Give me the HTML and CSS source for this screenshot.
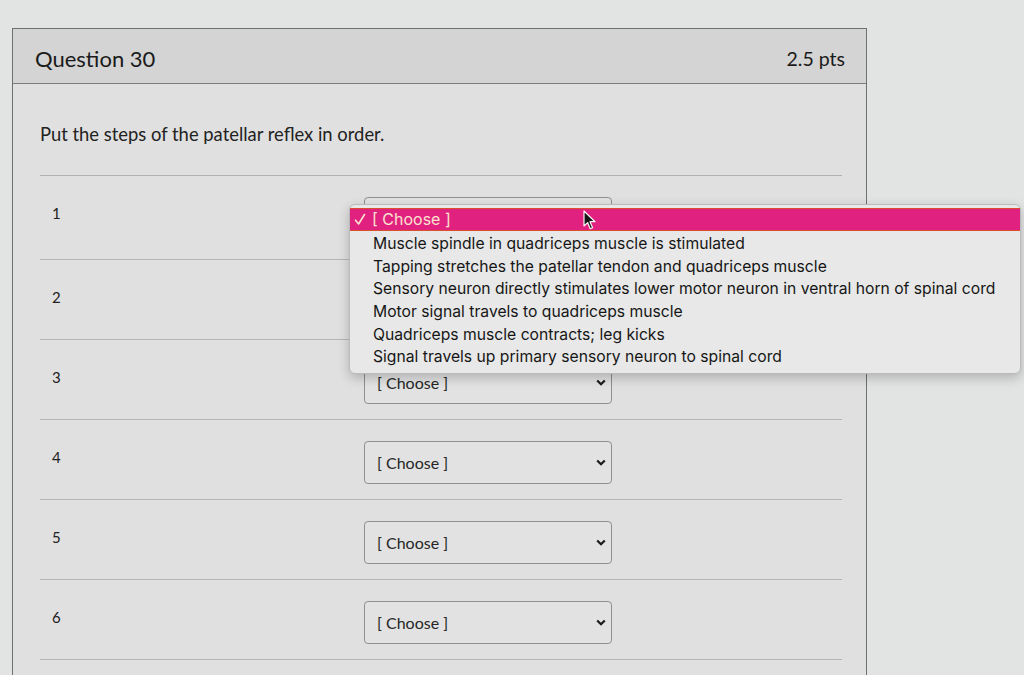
FILE: index.html
```html
<!DOCTYPE html>
<html lang="en">
<head>
    <meta charset="UTF-8">
    <title>Question 30</title>

    <link rel="stylesheet" href="styles.css">
</head>
<body>
<div class="card">
    <div class="cardHead">
        <h2 class="qTitle">Question 30</h2>
        <span class="pts">2.5 pts</span>
    </div>
    <div class="cardBody">
        <p class="prompt">Put the steps of the patellar reflex in order.</p>

        <div class="row first">
            <span class="num">1</span>
            <div class="pick">
                <span class="covered">[ Choose ]</span>
                <svg class="chev" width="10" height="7" viewBox="0 0 10 7"><path d="M1.2 1.5 L5 5.3 L8.8 1.5" fill="none" stroke="#1c1c1c" stroke-width="2.2"/></svg>

                <div class="menu">
                    <div class="menuItem active">
                        <svg class="tick" width="12" height="13" viewBox="0 0 12 13"><path d="M1.5 7.2 L4.6 11 L10.5 1.5" fill="none" stroke="#fbe2cf" stroke-width="1.6" stroke-linecap="round" stroke-linejoin="round"/></svg>
                        [ Choose ]
                        <svg class="cursor" width="14" height="21" viewBox="0 0 14 21"><path d="M1 1 L1 16 L4.6 12.6 L7.2 18.8 L9.6 17.8 L7 11.7 L12 11.7 Z" fill="#151515" stroke="#f4f4f4" stroke-width="1.2" stroke-linejoin="round"/></svg>
                    </div>
                    <div class="menuItem">Muscle spindle in quadriceps muscle is stimulated</div>
                    <div class="menuItem">Tapping stretches the patellar tendon and quadriceps muscle</div>
                    <div class="menuItem">Sensory neuron directly stimulates lower motor neuron in ventral horn of spinal cord</div>
                    <div class="menuItem">Motor signal travels to quadriceps muscle</div>
                    <div class="menuItem">Quadriceps muscle contracts; leg kicks</div>
                    <div class="menuItem">Signal travels up primary sensory neuron to spinal cord</div>
                </div>
            </div>
        </div>

        <div class="row">
            <span class="num">2</span>
            <div class="pick">
                <span class="covered">[ Choose ]</span>
                <svg class="chev" width="10" height="7" viewBox="0 0 10 7"><path d="M1.2 1.5 L5 5.3 L8.8 1.5" fill="none" stroke="#1c1c1c" stroke-width="2.2"/></svg>
            </div>
        </div>

        <div class="row">
            <span class="num">3</span>
            <div class="pick">
                <span>[ Choose ]</span>
                <svg class="chev" width="10" height="7" viewBox="0 0 10 7"><path d="M1.2 1.5 L5 5.3 L8.8 1.5" fill="none" stroke="#1c1c1c" stroke-width="2.2"/></svg>
            </div>
        </div>

        <div class="row">
            <span class="num">4</span>
            <div class="pick">
                <span>[ Choose ]</span>
                <svg class="chev" width="10" height="7" viewBox="0 0 10 7"><path d="M1.2 1.5 L5 5.3 L8.8 1.5" fill="none" stroke="#1c1c1c" stroke-width="2.2"/></svg>
            </div>
        </div>

        <div class="row">
            <span class="num">5</span>
            <div class="pick">
                <span>[ Choose ]</span>
                <svg class="chev" width="10" height="7" viewBox="0 0 10 7"><path d="M1.2 1.5 L5 5.3 L8.8 1.5" fill="none" stroke="#1c1c1c" stroke-width="2.2"/></svg>
            </div>
        </div>

        <div class="row">
            <span class="num">6</span>
            <div class="pick">
                <span>[ Choose ]</span>
                <svg class="chev" width="10" height="7" viewBox="0 0 10 7"><path d="M1.2 1.5 L5 5.3 L8.8 1.5" fill="none" stroke="#1c1c1c" stroke-width="2.2"/></svg>
            </div>
        </div>
    </div>
</div>
</body>
</html>
```

FILE: styles.css
```css
html, body {
    overflow: hidden;
}

body {
    font-family: Lato, "Open Sans", sans-serif;
    margin: 0;
    padding: 28px 0 0 12px;
    background-color: #e2e4e3;
    color: #222;
}

.card {
    width: 853px;
    border: 1px solid #6f7070;
    border-bottom: none;
    background-color: #dfe0df;
}

.cardHead {
    display: flex;
    justify-content: space-between;
    align-items: center;
    height: 54px;
    padding: 0 21px 0 22px;
    background-color: #d3d4d3;
    border-bottom: 1px solid #7b7c7b;
}

.qTitle {
    margin: 0;
    font-size: 22px;
    font-weight: 400;
    color: #1a1a1a;
    padding-top: 4px;
}

.pts {
    font-size: 19.5px;
    color: #1a1a1a;
    padding-top: 4px;
}

.cardBody {
    padding: 0 24px 40px 27px;
}

.prompt {
    margin: 0;
    padding: 38px 0 29px 0;
    font-size: 18.4px;
    line-height: 24px;
    color: #222;
    border-bottom: 1px solid #b0b2b1;
}

.row {
    display: flex;
    align-items: flex-start;
    padding: 21px 0 15px 0;
    border-bottom: 1px solid #b4b5b4;
}

.row.first {
    padding-bottom: 19px;
}

.num {
    width: 312px;
    padding: 6px 0 0 12px;
    font-size: 15px;
    line-height: 20px;
    color: #222;
}

.pick {
    position: relative;
    display: flex;
    justify-content: space-between;
    align-items: center;
    box-sizing: border-box;
    width: 248px;
    height: 43px;
    padding: 0 5px 0 12px;
    border: 1px solid #8e908f;
    border-radius: 4px;
    background-color: #e1e2e1;
    font-size: 16px;
    color: #262626;
}

.covered {
    visibility: hidden;
}

.chev {
    display: block;
}

.menu {
    position: absolute;
    left: -16px;
    top: 6px;
    z-index: 2;
    width: 672px;
    box-sizing: border-box;
    padding: 3px 0 4px 0;
    background-color: #e7e8e7;
    border: 1px solid #b9bab9;
    border-radius: 6px;
    box-shadow: rgba(0, 0, 0, 0.22) 0 4px 12px 0;
    font-family: Inter, "Liberation Sans", sans-serif;
    font-size: 15.7px;
    color: #161616;
}

.menuItem {
    height: 22.7px;
    line-height: 22.7px;
    padding-left: 23px;
    white-space: nowrap;
}

.menuItem.active {
    position: relative;
    height: 21px;
    line-height: 21px;
    margin-bottom: 2px;
    padding-left: 22px;
    background-color: #e1217f;
    border-top: 1px solid #d9502c;
    border-bottom: 1px solid #d9502c;
    color: #fbe2cf;
    font-size: 16px;
}

.tick {
    position: absolute;
    left: 4px;
    top: 4px;
}

.cursor {
    position: absolute;
    left: 233px;
    top: 1px;
}
```
